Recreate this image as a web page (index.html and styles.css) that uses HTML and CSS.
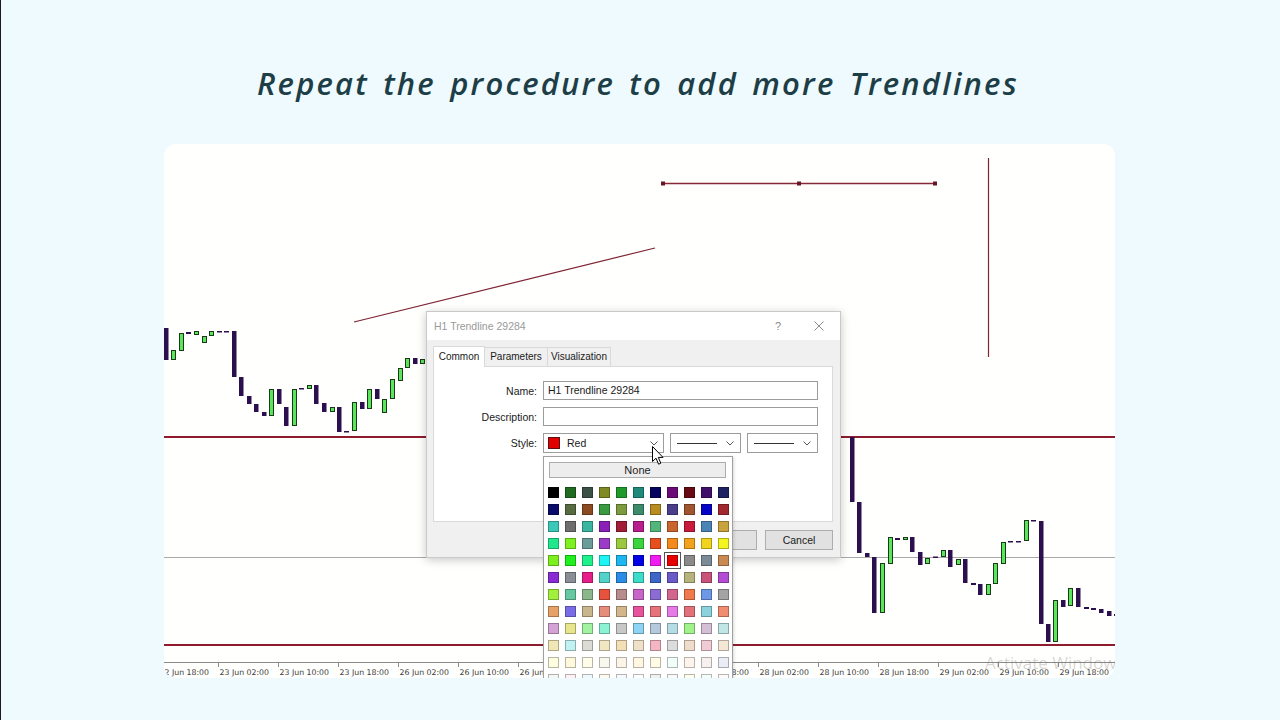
FILE: index.html
```html
<!DOCTYPE html>
<html lang="en">
<head>
<meta charset="utf-8">
<title>Repeat the procedure to add more Trendlines</title>
<link rel="stylesheet" href="styles.css">
</head>
<body>
<h1 class="title">Repeat the procedure to add more Trendlines</h1>
<div class="card">
  <svg class="chart" width="951" height="534" viewBox="164 144 951 534" xmlns="http://www.w3.org/2000/svg">
    <line class="grid-gray" x1="164" y1="557.5" x2="1115" y2="557.5"/>
    <line class="level" x1="164" y1="437" x2="1115" y2="437"/>
    <line class="level" x1="164" y1="645" x2="1115" y2="645"/>
    <line class="trend" x1="354" y1="322" x2="655" y2="248"/>
    <line class="trend-h" x1="663" y1="183.5" x2="935" y2="183.5"/>
    <rect class="handle" x="661" y="181.5" width="4" height="4"/>
    <rect class="handle" x="797" y="181.5" width="4" height="4"/>
    <rect class="handle" x="933" y="181.5" width="4" height="4"/>
    <line class="trend" x1="988.5" y1="158" x2="988.5" y2="357"/>

    <!-- left candles -->
    <rect class="d" x="164" y="328" width="4.5" height="32"/>
    <rect class="g" x="171.5" y="350.5" width="4" height="9"/>
    <rect class="g" x="179.5" y="333.5" width="4" height="17"/>
    <rect class="d" x="186" y="332" width="5" height="2"/>
    <rect class="g" x="194.5" y="331.5" width="4" height="3"/>
    <rect class="g" x="202.5" y="336.5" width="4" height="6"/>
    <rect class="g" x="209.5" y="331.5" width="4" height="4"/>
    <rect class="d" x="217" y="331" width="5" height="1.5"/>
    <rect class="d" x="224" y="331" width="5" height="1.5"/>
    <rect class="d" x="232" y="331" width="4.5" height="46"/>
    <rect class="d" x="239" y="377" width="4.5" height="19"/>
    <rect class="d" x="247" y="396" width="4.5" height="8"/>
    <rect class="d" x="254" y="404" width="4.5" height="8"/>
    <rect class="d" x="262" y="412" width="4.5" height="4"/>
    <rect class="g" x="269.5" y="389.5" width="4" height="26"/>
    <rect class="d" x="277" y="389" width="4.5" height="15"/>
    <rect class="d" x="284" y="407" width="4.5" height="19"/>
    <rect class="g" x="292.5" y="389.5" width="4" height="36"/>
    <rect class="d" x="299" y="388" width="5" height="1.5"/>
    <rect class="g" x="307.5" y="385.5" width="4" height="3"/>
    <rect class="d" x="314" y="385" width="4.5" height="19"/>
    <rect class="d" x="322" y="403" width="4.5" height="9"/>
    <rect class="g" x="330.5" y="407.5" width="4" height="4"/>
    <rect class="d" x="337" y="407" width="4.5" height="25"/>
    <rect class="d" x="344" y="431" width="5" height="1.5"/>
    <rect class="g" x="352.5" y="402.5" width="4" height="28"/>
    <rect class="d" x="360" y="402" width="4.5" height="7"/>
    <rect class="g" x="367.5" y="389.5" width="4" height="19"/>
    <rect class="d" x="375" y="389" width="4.5" height="10"/>
    <rect class="g" x="382.5" y="399.5" width="4" height="13"/>
    <rect class="g" x="390.5" y="379.5" width="4" height="19"/>
    <rect class="g" x="398.5" y="368.5" width="4" height="12"/>
    <rect class="g" x="405.5" y="358.5" width="4" height="9"/>
    <rect class="d" x="413" y="358" width="4.5" height="6"/>
    <rect class="g" x="420.5" y="359.5" width="4" height="4"/>

    <!-- right candles -->
    <rect class="d" x="850" y="437" width="4.5" height="65"/>
    <rect class="d" x="857" y="502" width="4.5" height="51"/>
    <rect class="d" x="865" y="553" width="4.5" height="4"/>
    <rect class="d" x="872" y="557" width="4.5" height="56"/>
    <rect class="g" x="880.5" y="563.5" width="4" height="49"/>
    <rect class="g" x="888.5" y="537.5" width="4" height="26"/>
    <rect class="d" x="895" y="538" width="5" height="2"/>
    <rect class="g" x="903.5" y="537.5" width="4" height="2"/>
    <rect class="d" x="910" y="537" width="4.5" height="15"/>
    <rect class="d" x="918" y="552" width="4.5" height="13"/>
    <rect class="g" x="925.5" y="558.5" width="4" height="5"/>
    <rect class="d" x="933" y="556.5" width="5" height="1.5"/>
    <rect class="g" x="941.5" y="550.5" width="4" height="6"/>
    <rect class="d" x="948" y="550" width="4.5" height="17"/>
    <rect class="g" x="956.5" y="559.5" width="4" height="5"/>
    <rect class="d" x="963" y="559" width="4.5" height="24"/>
    <rect class="d" x="971" y="583" width="5" height="2"/>
    <rect class="d" x="978" y="584" width="4.5" height="11"/>
    <rect class="g" x="986.5" y="584.5" width="4" height="10"/>
    <rect class="g" x="993.5" y="563.5" width="4" height="20"/>
    <rect class="g" x="1001.5" y="542.5" width="4" height="21"/>
    <rect class="d" x="1008" y="541" width="5" height="1.5"/>
    <rect class="d" x="1016" y="541" width="5" height="1.5"/>
    <rect class="g" x="1024.5" y="520.5" width="4" height="20"/>
    <rect class="d" x="1031" y="520" width="5" height="1.5"/>
    <rect class="d" x="1039" y="521" width="4.5" height="103"/>
    <rect class="d" x="1046" y="624" width="4.5" height="18"/>
    <rect class="g" x="1053.5" y="600.5" width="4" height="41"/>
    <rect class="d" x="1061" y="600" width="4.5" height="7"/>
    <rect class="g" x="1068.5" y="588.5" width="4" height="17"/>
    <rect class="d" x="1076" y="588" width="4.5" height="19"/>
    <rect class="d" x="1084" y="607" width="5" height="2"/>
    <rect class="d" x="1091" y="608" width="5" height="2"/>
    <rect class="d" x="1099" y="609" width="4.5" height="4"/>
    <rect class="d" x="1107" y="611" width="4.5" height="5"/>
    <rect class="d" x="1114" y="614" width="3" height="2"/>

    <!-- time axis -->
    <line class="axis" x1="164" y1="662.5" x2="1115" y2="662.5"/>
    <g class="ticks">
      <line x1="158.5" y1="662" x2="158.5" y2="667"/>
      <line x1="218.5" y1="662" x2="218.5" y2="667"/>
      <line x1="278.5" y1="662" x2="278.5" y2="667"/>
      <line x1="338.5" y1="662" x2="338.5" y2="667"/>
      <line x1="398.5" y1="662" x2="398.5" y2="667"/>
      <line x1="458.5" y1="662" x2="458.5" y2="667"/>
      <line x1="518.5" y1="662" x2="518.5" y2="667"/>
      <line x1="578.5" y1="662" x2="578.5" y2="667"/>
      <line x1="638.5" y1="662" x2="638.5" y2="667"/>
      <line x1="698.5" y1="662" x2="698.5" y2="667"/>
      <line x1="758.5" y1="662" x2="758.5" y2="667"/>
      <line x1="818.5" y1="662" x2="818.5" y2="667"/>
      <line x1="878.5" y1="662" x2="878.5" y2="667"/>
      <line x1="938.5" y1="662" x2="938.5" y2="667"/>
      <line x1="998.5" y1="662" x2="998.5" y2="667"/>
      <line x1="1058.5" y1="662" x2="1058.5" y2="667"/>
    </g>
    <g class="axis-labels">
      <text x="159.5" y="674.5">22 Jun 18:00</text>
      <text x="219.5" y="674.5">23 Jun 02:00</text>
      <text x="279.5" y="674.5">23 Jun 10:00</text>
      <text x="339.5" y="674.5">23 Jun 18:00</text>
      <text x="399.5" y="674.5">26 Jun 02:00</text>
      <text x="459.5" y="674.5">26 Jun 10:00</text>
      <text x="519.5" y="674.5">26 Jun 18:00</text>
      <text x="579.5" y="674.5">27 Jun 02:00</text>
      <text x="639.5" y="674.5">27 Jun 10:00</text>
      <text x="699.5" y="674.5">27 Jun 18:00</text>
      <text x="759.5" y="674.5">28 Jun 02:00</text>
      <text x="819.5" y="674.5">28 Jun 10:00</text>
      <text x="879.5" y="674.5">28 Jun 18:00</text>
      <text x="939.5" y="674.5">29 Jun 02:00</text>
      <text x="999.5" y="674.5">29 Jun 10:00</text>
      <text x="1059.5" y="674.5">29 Jun 18:00</text>
    </g>
  </svg>

  <div class="watermark">Activate Windows</div>

  <div class="dialog">
    <div class="dlg-title">
      <span class="dlg-caption">H1 Trendline 29284</span>
      <span class="dlg-help">?</span>
      <svg class="dlg-close" width="10" height="10" viewBox="0 0 10 10"><path d="M0.5 0.5 L9.5 9.5 M9.5 0.5 L0.5 9.5"/></svg>
    </div>
    <div class="dlg-body">
      <div class="tabs">
        <div class="tab active tab-common">Common</div>
        <div class="tab tab-params">Parameters</div>
        <div class="tab tab-vis">Visualization</div>
      </div>
      <div class="panel">
        <div class="form">
          <label class="lbl">Name:</label>
          <div class="field">H1 Trendline 29284</div>
          <label class="lbl">Description:</label>
          <div class="field"></div>
          <label class="lbl">Style:</label>
          <div class="style-row">
            <div class="combo combo-color">
              <span class="color-chip"></span>
              <span class="combo-text">Red</span>
              <svg class="chev" width="8" height="5" viewBox="0 0 8 5"><polyline points="0.5,0.5 4,4 7.5,0.5"/></svg>
            </div>
            <div class="combo combo-line">
              <span class="line-sample"></span>
              <svg class="chev" width="8" height="5" viewBox="0 0 8 5"><polyline points="0.5,0.5 4,4 7.5,0.5"/></svg>
            </div>
            <div class="combo combo-line">
              <span class="line-sample"></span>
              <svg class="chev" width="8" height="5" viewBox="0 0 8 5"><polyline points="0.5,0.5 4,4 7.5,0.5"/></svg>
            </div>
          </div>
        </div>
      </div>
      <div class="buttons">
        <div class="btn">OK</div>
        <div class="btn btn-cancel">Cancel</div>
      </div>
    </div>
  </div>

  <div class="palette">
    <div class="none-btn">None</div>
    <div class="swatches">
      <span class="sw" style="background:#000000"></span>
      <span class="sw" style="background:#1f6b1f"></span>
      <span class="sw" style="background:#3b5148"></span>
      <span class="sw" style="background:#808a22"></span>
      <span class="sw" style="background:#1f9a2a"></span>
      <span class="sw" style="background:#1f8a7a"></span>
      <span class="sw" style="background:#05055f"></span>
      <span class="sw" style="background:#6c0a78"></span>
      <span class="sw" style="background:#680a14"></span>
      <span class="sw" style="background:#41106a"></span>
      <span class="sw" style="background:#1e2262"></span>

      <span class="sw" style="background:#0a0a6a"></span>
      <span class="sw" style="background:#566b40"></span>
      <span class="sw" style="background:#8b4a1f"></span>
      <span class="sw" style="background:#3a9a40"></span>
      <span class="sw" style="background:#7c9a3e"></span>
      <span class="sw" style="background:#3c8c6c"></span>
      <span class="sw" style="background:#b88c20"></span>
      <span class="sw" style="background:#4a3d8a"></span>
      <span class="sw" style="background:#a0552f"></span>
      <span class="sw" style="background:#0505c8"></span>
      <span class="sw" style="background:#a0282e"></span>

      <span class="sw" style="background:#3cc8b8"></span>
      <span class="sw" style="background:#6e6e6e"></span>
      <span class="sw" style="background:#3ab6a0"></span>
      <span class="sw" style="background:#8a1eb6"></span>
      <span class="sw" style="background:#a21e38"></span>
      <span class="sw" style="background:#b81e8c"></span>
      <span class="sw" style="background:#52b67a"></span>
      <span class="sw" style="background:#c8662e"></span>
      <span class="sw" style="background:#c81a3c"></span>
      <span class="sw" style="background:#4a84b6"></span>
      <span class="sw" style="background:#c8a23c"></span>

      <span class="sw" style="background:#20e68c"></span>
      <span class="sw" style="background:#7cf020"></span>
      <span class="sw" style="background:#6a9c9a"></span>
      <span class="sw" style="background:#9a3cc8"></span>
      <span class="sw" style="background:#9cc83e"></span>
      <span class="sw" style="background:#3cd43c"></span>
      <span class="sw" style="background:#e6501e"></span>
      <span class="sw" style="background:#f28a1e"></span>
      <span class="sw" style="background:#f2a21e"></span>
      <span class="sw" style="background:#f2d41e"></span>
      <span class="sw" style="background:#f4f41e"></span>

      <span class="sw" style="background:#7cf01e"></span>
      <span class="sw" style="background:#1ef01e"></span>
      <span class="sw" style="background:#1ef08c"></span>
      <span class="sw" style="background:#1ef4f4"></span>
      <span class="sw" style="background:#1eb6f0"></span>
      <span class="sw" style="background:#0000e6"></span>
      <span class="sw" style="background:#f01ef0"></span>
      <span class="sw sel" style="background:#e60000"></span>
      <span class="sw" style="background:#8a8a8a"></span>
      <span class="sw" style="background:#7a8a96"></span>
      <span class="sw" style="background:#c88a52"></span>

      <span class="sw" style="background:#8a2ad4"></span>
      <span class="sw" style="background:#8a8c96"></span>
      <span class="sw" style="background:#e61e8a"></span>
      <span class="sw" style="background:#52d2c8"></span>
      <span class="sw" style="background:#2a8ce6"></span>
      <span class="sw" style="background:#3cdcca"></span>
      <span class="sw" style="background:#3c66c8"></span>
      <span class="sw" style="background:#6a5ac8"></span>
      <span class="sw" style="background:#b6b47c"></span>
      <span class="sw" style="background:#c8527a"></span>
      <span class="sw" style="background:#b44cd4"></span>

      <span class="sw" style="background:#a2f03c"></span>
      <span class="sw" style="background:#66c8a2"></span>
      <span class="sw" style="background:#8cb68c"></span>
      <span class="sw" style="background:#e6523c"></span>
      <span class="sw" style="background:#b68c8c"></span>
      <span class="sw" style="background:#c866c8"></span>
      <span class="sw" style="background:#8a6cd4"></span>
      <span class="sw" style="background:#d2668c"></span>
      <span class="sw" style="background:#f07a4c"></span>
      <span class="sw" style="background:#6c98e6"></span>
      <span class="sw" style="background:#a4a4a4"></span>

      <span class="sw" style="background:#e6a266"></span>
      <span class="sw" style="background:#7a6ce6"></span>
      <span class="sw" style="background:#c8b68c"></span>
      <span class="sw" style="background:#e68c7a"></span>
      <span class="sw" style="background:#d4b68c"></span>
      <span class="sw" style="background:#e6529c"></span>
      <span class="sw" style="background:#e6727c"></span>
      <span class="sw" style="background:#e67ae6"></span>
      <span class="sw" style="background:#e2727a"></span>
      <span class="sw" style="background:#8cd2dc"></span>
      <span class="sw" style="background:#f28c70"></span>

      <span class="sw" style="background:#d4a2d4"></span>
      <span class="sw" style="background:#e8e68c"></span>
      <span class="sw" style="background:#a2f2a2"></span>
      <span class="sw" style="background:#8cf2d4"></span>
      <span class="sw" style="background:#c8c8c8"></span>
      <span class="sw" style="background:#8cd4f2"></span>
      <span class="sw" style="background:#b6c8dc"></span>
      <span class="sw" style="background:#b6dce6"></span>
      <span class="sw" style="background:#a2f28c"></span>
      <span class="sw" style="background:#d4c0d4"></span>
      <span class="sw" style="background:#c0e6e6"></span>

      <span class="sw" style="background:#f0e6b6"></span>
      <span class="sw" style="background:#c0f2f2"></span>
      <span class="sw" style="background:#dcdcd4"></span>
      <span class="sw" style="background:#f0e6c0"></span>
      <span class="sw" style="background:#f4deb6"></span>
      <span class="sw" style="background:#f0e0ca"></span>
      <span class="sw" style="background:#f4b6c4"></span>
      <span class="sw" style="background:#dcdcdc"></span>
      <span class="sw" style="background:#f0dcca"></span>
      <span class="sw" style="background:#f0cad4"></span>
      <span class="sw" style="background:#f4e6d4"></span>

      <span class="sw" style="background:#fffde0"></span>
      <span class="sw" style="background:#fff8dc"></span>
      <span class="sw" style="background:#fffde8"></span>
      <span class="sw" style="background:#f8f8ec"></span>
      <span class="sw" style="background:#fcf4e6"></span>
      <span class="sw" style="background:#fff7e2"></span>
      <span class="sw" style="background:#fffbe4"></span>
      <span class="sw" style="background:#f0fff8"></span>
      <span class="sw" style="background:#fff4ec"></span>
      <span class="sw" style="background:#f6f0f0"></span>
      <span class="sw" style="background:#eaecf6"></span>

      <span class="sw" style="background:#f5f5f5"></span>
      <span class="sw" style="background:#fff0f5"></span>
      <span class="sw" style="background:#f0f8ff"></span>
      <span class="sw" style="background:#fffaf0"></span>
      <span class="sw" style="background:#f8f8ff"></span>
      <span class="sw" style="background:#ffffff"></span>
      <span class="sw" style="background:#f0f0f0"></span>
      <span class="sw" style="background:#fafafa"></span>
      <span class="sw" style="background:#fffff0"></span>
      <span class="sw" style="background:#f5fffa"></span>
      <span class="sw" style="background:#fffafa"></span>
    </div>
  </div>

  <svg class="cursor" width="13" height="20" viewBox="0 0 13 20">
    <path d="M0.5 0.5 L0.5 15.5 L4 12.2 L6.6 18.2 L8.8 17.2 L6.3 11.4 L11 11.4 Z"/>
  </svg>
</div>
</body>
</html>
```

FILE: styles.css
```css
* { box-sizing: border-box; }

html, body { margin: 0; padding: 0; }

body {
  width: 1280px;
  height: 720px;
  overflow: hidden;
  background: #eefafd;
  border-left: 1px solid #1b1b1b;
  font-family: "Liberation Sans", Arial, sans-serif;
}

.title {
  margin: 0;
  height: 144px;
  padding-top: 63px;
  padding-right: 5px;
  text-align: center;
  font-family: "Open Sans", "Liberation Sans", sans-serif;
  font-style: italic;
  font-weight: 600;
  font-size: 31px;
  letter-spacing: 2.2px;
  word-spacing: 4px;
  line-height: 40px;
  color: #1d3e46;
}

.card {
  position: relative;
  margin-left: 163px;
  width: 951px;
  height: 534px;
  background: #fffffd;
  border-radius: 12px;
  overflow: hidden;
}

.chart { display: block; }

.level { stroke: #8e1c2c; stroke-width: 2; }
.grid-gray { stroke: #a9a9a9; stroke-width: 1; }
.trend { stroke: #7e2434; stroke-width: 1.2; }
.trend-h { stroke: #862a3a; stroke-width: 1.6; }
.handle { fill: #6a1626; }

.d { fill: #2c0f4f; }
.g { fill: #5be55b; stroke: #1a3a1a; stroke-width: 1; }

.axis { stroke: #8a8a8a; stroke-width: 1; }
.ticks line { stroke: #8a8a8a; stroke-width: 1; }
.axis-labels text {
  font-family: "DejaVu Sans", sans-serif;
  font-size: 7.8px;
  fill: #3c3c3c;
}

.watermark {
  position: absolute;
  left: 821px;
  top: 507px;
  font-family: "Open Sans", "Liberation Sans", sans-serif;
  font-size: 17px;
  color: rgba(110, 110, 110, 0.28);
  white-space: nowrap;
}

/* dialog */
.dialog {
  position: absolute;
  left: 262px;
  top: 167px;
  width: 415px;
  height: 247px;
  background: #f0f0f0;
  border: 1px solid #c9c9c9;
  box-shadow: 0 2px 9px rgba(0, 0, 0, 0.22);
  display: flex;
  flex-direction: column;
}

.dlg-title {
  height: 28px;
  background: #ffffff;
  display: flex;
  align-items: center;
  padding-left: 7px;
  color: #9a9a9a;
  font-size: 10.5px;
}

.dlg-caption { flex: 1; }

.dlg-help {
  font-size: 11px;
  color: #8a8a8a;
  margin-right: 33px;
}

.dlg-close {
  margin-right: 16px;
}
.dlg-close path { stroke: #8a8a8a; stroke-width: 1; fill: none; }

.dlg-body {
  padding: 6px 7px 6px 6px;
  display: flex;
  flex-direction: column;
}

.tabs {
  display: flex;
  align-items: flex-end;
  height: 20px;
}

.tab {
  height: 19px;
  border: 1px solid #d9d9d9;
  border-bottom: none;
  border-left: none;
  background: #f0f0f0;
  font-size: 10px;
  line-height: 18px;
  color: #1a1a1a;
  text-align: center;
}

.tab.active {
  position: relative;
  z-index: 1;
  height: 21px;
  margin-bottom: -1px;
  background: #ffffff;
  border-left: 1px solid #d9d9d9;
  line-height: 19px;
}

.tab-common { width: 52px; }
.tab-params { width: 63px; }
.tab-vis { width: 63px; }

.panel {
  height: 156px;
  background: #ffffff;
  border: 1px solid #d9d9d9;
}

.form {
  display: grid;
  grid-template-columns: 103px 275px;
  column-gap: 6px;
  row-gap: 7px;
  padding-top: 14px;
}

.lbl {
  align-self: center;
  text-align: right;
  font-size: 10.5px;
  color: #1a1a1a;
}

.field {
  height: 19px;
  border: 1px solid #9c9c9c;
  background: #ffffff;
  font-size: 10.5px;
  line-height: 17px;
  padding-left: 4px;
  color: #1a1a1a;
}

.style-row {
  display: flex;
  gap: 6px;
}

.combo {
  height: 20px;
  border: 1px solid #9c9c9c;
  background: #ffffff;
  display: flex;
  align-items: center;
}

.combo-color {
  width: 121px;
  padding: 0 5px 0 4px;
}

.color-chip {
  width: 12px;
  height: 12px;
  background: #e00000;
  border: 1px solid #5a1010;
}

.combo-text {
  margin-left: 7px;
  font-size: 10.5px;
  color: #1a1a1a;
  flex: 1;
}

.combo-line {
  width: 71px;
  padding: 0 6px;
  justify-content: space-between;
}

.line-sample {
  width: 40px;
  height: 1px;
  background: #333333;
}

.chev polyline { fill: none; stroke: #555555; stroke-width: 1; }

.buttons {
  display: flex;
  justify-content: flex-end;
  gap: 8px;
  margin-top: 8px;
}

.btn {
  width: 68px;
  height: 20px;
  border: 1px solid #adadad;
  background: #e1e1e1;
  font-size: 10.5px;
  line-height: 18px;
  text-align: center;
  color: #1a1a1a;
}

/* colour dropdown */
.palette {
  position: absolute;
  left: 379px;
  top: 312px;
  width: 190px;
  height: 240px;
  background: #ffffff;
  border: 1px solid #a0a0a0;
  box-shadow: 1px 1px 3px rgba(0, 0, 0, 0.15);
}

.none-btn {
  margin: 5px 6px 0 5px;
  height: 16px;
  border: 1px solid #adadad;
  background: #ededed;
  font-size: 11px;
  line-height: 14px;
  text-align: center;
  color: #222222;
}

.swatches {
  display: grid;
  grid-template-columns: repeat(11, 11px);
  gap: 6px;
  margin: 9px 0 0 4px;
}

.sw {
  display: block;
  width: 11px;
  height: 11px;
  border: 1px solid rgba(0, 0, 0, 0.28);
}

.sw.sel {
  outline: 1px solid #555555;
  outline-offset: 2px;
}

.cursor {
  position: absolute;
  left: 488px;
  top: 302px;
}
.cursor path { fill: #ffffff; stroke: #000000; stroke-width: 1; stroke-linejoin: round; }
```
